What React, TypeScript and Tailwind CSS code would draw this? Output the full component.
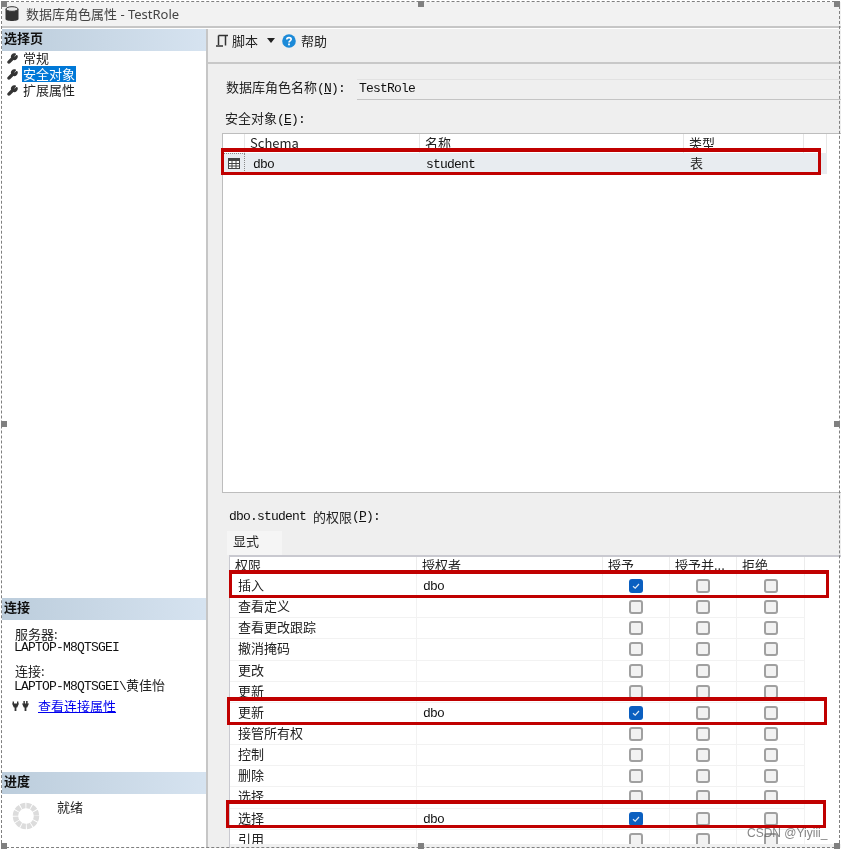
import { Wrench } from "lucide-react";
import type { ReactNode } from "react";

const mono = "font-['Liberation_Mono','Noto_Sans_CJK_SC',monospace] text-[13px] tracking-[-0.8px] text-[#111]";

type Perm = { name: string; grantor?: string; granted?: boolean };

const perms: Perm[] = [
  { name: "插入", grantor: "dbo", granted: true },
  { name: "查看定义" },
  { name: "查看更改跟踪" },
  { name: "撤消掩码" },
  { name: "更改" },
  { name: "更新" },
  { name: "更新", grantor: "dbo", granted: true },
  { name: "接管所有权" },
  { name: "控制" },
  { name: "删除" },
  { name: "选择" },
  { name: "选择", grantor: "dbo", granted: true },
  { name: "引用" },
];

function SectionHeader({ children }: { children: ReactNode }) {
  return (
    <div className="flex h-[22px] items-center bg-gradient-to-r from-[#bccddc] to-[#d6e3f0] pb-[6px] pl-[2px] font-bold leading-none text-[#111]">
      {children}
    </div>
  );
}

function PageItem({ label, active }: { label: string; active?: boolean }) {
  return (
    <div className="flex h-4 items-center pl-[5px]">
      <Wrench size={11} strokeWidth={3} className="mr-[4px] shrink-0 fill-[#333] text-[#333]" />
      <span className={active ? "bg-[#0078d7] px-[1px] pb-[1px] leading-[15px] text-white" : "px-[1px] pb-[1px] leading-[15px]"}>{label}</span>
    </div>
  );
}

function Checkbox({ checked }: { checked?: boolean }) {
  return (
    <div
      className={
        checked
          ? "flex h-[14px] w-[14px] items-center justify-center rounded-[3px] bg-[#0a5fc0]"
          : "h-[14px] w-[14px] rounded-[3px] border-2 border-[#a0a0a0] bg-[#f2f2f2]"
      }
    >
      {checked ? (
        <svg viewBox="0 0 10 10" className="h-[10px] w-[10px]">
          <path d="M2 5.2 L4.2 7.2 L8 3" fill="none" stroke="#dfe9f5" strokeWidth="1.2" />
        </svg>
      ) : null}
    </div>
  );
}

function RedBox({ className }: { className: string }) {
  return <div className={"pointer-events-none absolute border-[3px] border-t-4 border-[#c00000] " + className} />;
}

function Handle({ className }: { className: string }) {
  return <div className={"absolute h-[6px] w-[6px] bg-[#808080] " + className} />;
}

function DbIcon() {
  return (
    <svg viewBox="0 0 14 16" className="h-4 w-[14px] shrink-0">
      <path d="M0.5 3 V13 C0.5 15.6 13.5 15.6 13.5 13 V3 Z" fill="#333" />
      <ellipse cx="7" cy="3" rx="6" ry="2.3" fill="#e8e8e8" stroke="#333" strokeWidth="1" />
    </svg>
  );
}

function ScriptIcon() {
  return (
    <svg viewBox="0 0 14 14" className="h-[14px] w-[14px] shrink-0">
      <path d="M3.5 1.5 H13 M3.5 1.5 V11 M10.5 1.5 V11.5 M1 12 H8" fill="none" stroke="#333" strokeWidth="1.5" />
    </svg>
  );
}

function HelpIcon() {
  return (
    <svg viewBox="0 0 14 14" className="h-[14px] w-[14px] shrink-0">
      <circle cx="7" cy="7" r="6.8" fill="#1c8ad8" />
      <path d="M4.8 5.4 C4.8 3 9.2 3 9.2 5.3 C9.2 6.8 7 6.8 7 8.4" fill="none" stroke="#fff" strokeWidth="1.6" />
      <rect x="6.1" y="9.5" width="1.8" height="1.8" fill="#fff" />
    </svg>
  );
}

function PlugIcon() {
  return (
    <svg viewBox="0 0 17 10" className="h-[10px] w-[17px] shrink-0">
      <path d="M0 2.5 H7 L5.2 6.5 H1.8 Z M2.6 6.5 H4.4 V10 H2.6 Z M0.6 0.5 H2 V2.5 H0.6 Z M5 0.5 H6.4 V2.5 H5 Z" fill="#333" />
      <path d="M10 2.5 H17 L15.2 6.5 H11.8 Z M12.6 6.5 H14.4 V10 H12.6 Z M11.4 0 H12.9 V2.5 H11.4 Z M14.1 0 H15.6 V2.5 H14.1 Z" fill="#333" />
    </svg>
  );
}

function TableIcon() {
  return (
    <svg viewBox="0 0 12 11" className="h-[11px] w-3">
      <rect x="0.5" y="0.5" width="11" height="10" fill="#fff" stroke="#444" />
      <rect x="0.5" y="0.5" width="11" height="2.5" fill="#444" />
      <path d="M0.5 5.5 H11.5 M0.5 8 H11.5 M4 3 V10.5 M8 3 V10.5" stroke="#444" strokeWidth="1" />
    </svg>
  );
}

function Spinner() {
  return (
    <svg viewBox="0 0 28 28" className="h-[28px] w-[28px]">
      <circle cx="14" cy="14" r="10.5" fill="none" stroke="#dcdcdc" strokeWidth="5.5" strokeDasharray="4.6 0.9" />
    </svg>
  );
}

export default function App() {
  return (
    <div className="relative h-[850px] w-[841px] overflow-hidden bg-white pb-[2px] pl-[2px] pt-[2px] font-['Noto_Sans_CJK_SC','Liberation_Sans',sans-serif] text-[13px] text-[#222] blur-[0.3px]">
      <div className="flex h-full flex-col">
        {/* title bar */}
        <div className="flex h-[26px] shrink-0 items-center gap-[7px] border-b-2 border-[#c6c6c6] bg-[#f2f2f2] pl-[3px] text-[#444]">
          <DbIcon />
          <span className="whitespace-pre">
            数据库角色属性<span className="font-['Noto_Sans',sans-serif] text-[13px]"> - TestRole</span>
          </span>
        </div>

        <div className="flex min-h-0 flex-1 pt-[1px]">
          {/* left panel */}
          <div className="flex w-[204px] shrink-0 flex-col bg-white">
            <div className="flex-1">
              <SectionHeader>选择页</SectionHeader>
              <div className="-mt-[1px]">
                <PageItem label="常规" />
                <PageItem label="安全对象" active />
                <PageItem label="扩展属性" />
              </div>
            </div>
            <div className="h-[174px] shrink-0">
              <SectionHeader>连接</SectionHeader>
              <div className="pl-3 pt-[7px] leading-[13px]">
                <div className="pl-[1px]">服务器:</div>
                <div className={"pt-[1px] " + mono}>LAPTOP-M8QTSGEI</div>
                <div className="mt-[10px] pl-[1px]">连接:</div>
                <div className="whitespace-nowrap pt-[1px]">
                  <span className={mono}>LAPTOP-M8QTSGEI\</span>黄佳怡
                </div>
                <div className="-ml-[2px] mt-[6px] flex items-center gap-[9px]">
                  <PlugIcon />
                  <span className="text-[#0000ee] underline">查看连接属性</span>
                </div>
              </div>
            </div>
            <div className="h-[76px] shrink-0">
              <SectionHeader>进度</SectionHeader>
              <div className="flex items-start pl-[10px] pt-[8px]">
                <Spinner />
                <span className="-mt-[3px] ml-[17px] leading-4">就绪</span>
              </div>
            </div>
          </div>

          {/* right panel */}
          <div className="flex min-w-0 flex-1 flex-col border-l-2 border-[#c6c6c6] bg-[#efefef]">
            <div className="flex h-[35px] shrink-0 items-center border-b-2 border-[#c8c8c8] pb-[10px] pl-[7px]">
              <ScriptIcon />
              <span className="ml-[3px]">脚本</span>
              <span className="ml-[9px] h-0 w-0 border-x-[4.5px] border-t-[5px] border-x-transparent border-t-[#222]" />
              <span className="ml-[7px]">
                <HelpIcon />
              </span>
              <span className="ml-[5px]">帮助</span>
            </div>

            <div className="flex h-[35px] shrink-0 items-end pl-[18px]">
              <div className="flex h-[20px] w-full items-center">
                <span className="w-[131px] shrink-0 whitespace-pre pb-[2px]">
                  数据库角色名称
                  <span className={mono}>
                    (<span className="underline">N</span>):
                  </span>
                </span>
                <div className={"flex h-[21px] flex-1 items-center border-y border-b-[#c4c4c4] border-t-[#e2e2e2] pl-[2px] " + mono}>TestRole</div>
              </div>
            </div>

            <div className="flex h-[34px] shrink-0 items-center pb-[1px] pl-[17px] pt-[6px]">
              <span className="whitespace-pre">
                安全对象
                <span className={mono}>
                  (<span className="underline">E</span>):
                </span>
              </span>
            </div>

            {/* securables grid */}
            <div className="ml-[14px] h-[360px] shrink-0 overflow-hidden border-y border-l border-[#bdbdbd] bg-white">
              <div className="grid h-[19px] w-[604px] grid-cols-[22px_175px_264px_120px_23px] overflow-hidden">
                <div className="border-r border-[#e6e6e6]" />
                <div className="border-r border-[#e6e6e6] pl-[5px] leading-[17px]">Schema</div>
                <div className="border-r border-[#e6e6e6] pl-[5px] leading-[17px]">名称</div>
                <div className="border-r border-[#e6e6e6] pl-[5px] leading-[17px]">类型</div>
                <div className="border-r border-[#e6e6e6]" />
              </div>
              <div className="grid h-[21px] w-[604px] grid-cols-[22px_175px_264px_120px_23px] bg-[#e8ecf0]">
                <div className="flex items-center justify-center border border-dotted border-[#888]">
                  <TableIcon />
                </div>
                <div className={"flex items-center pl-[8px] pt-[2px] " + mono}>dbo</div>
                <div className={"flex items-center pl-[6px] pt-[2px] " + mono}>student</div>
                <div className="flex items-center pb-[2px] pl-[6px] leading-none">表</div>
                <div />
              </div>
            </div>

            <div className="flex h-[35px] shrink-0 items-end whitespace-pre pb-[3px] pl-[21px] leading-[16px]">
              <span className={mono}>dbo.student </span>的权限
              <span className={mono}>
                (<span className="underline">P</span>):
              </span>
            </div>

            {/* permission tab */}
            <div className="ml-[19px] mt-[3px] flex h-[24px] w-[55px] shrink-0 items-center bg-[#f5f5f5] pb-[6px] pl-[6px] leading-none">显式</div>

            {/* permissions grid */}
            <div className="ml-[21px] min-h-0 flex-1 overflow-hidden border-t-2 border-l border-[#c9c9d0] bg-white">
              <div className="grid h-[19px] w-[575px] grid-cols-[187px_186px_67px_67px_68px] overflow-hidden">
                {["权限", "授权者", "授予", "授予并...", "拒绝"].map((h) => (
                  <div key={h} className="whitespace-nowrap border-r border-[#ececec] pl-[5px] leading-[16px]">
                    {h}
                  </div>
                ))}
              </div>
              <div className="h-[268px] overflow-hidden">
                {perms.map((p, i) => (
                  <div key={i} className="grid h-[21.15px] w-[575px] grid-cols-[187px_186px_67px_67px_68px]">
                    <div className="flex items-center border-r border-b border-[#f2f2f2] pb-[3px] pl-[8px] leading-none">{p.name}</div>
                    <div className={"flex items-center border-r border-b border-[#f2f2f2] pl-[6px] pt-[1px] " + mono}>{p.grantor}</div>
                    <div className="flex items-center justify-center border-r border-b border-[#f2f2f2]">
                      <Checkbox checked={p.granted} />
                    </div>
                    <div className="flex items-center justify-center border-r border-b border-[#f2f2f2]">
                      <Checkbox />
                    </div>
                    <div className="flex items-center justify-center border-r border-b border-[#f2f2f2]">
                      <Checkbox />
                    </div>
                  </div>
                ))}
              </div>
              <div className="h-[8px] bg-[#f0f0f0]" />
            </div>
          </div>
        </div>
      </div>

      {/* dashed selection frame and handles from the screenshot */}
      <div className="pointer-events-none absolute left-[1px] top-[1px] h-[847px] w-[839px] border border-dashed border-[#808080]" />
      <Handle className="left-[1px] top-[1px]" />
      <Handle className="left-[418px] top-[1px]" />
      <Handle className="left-[834px] top-[1px]" />
      <Handle className="left-[1px] top-[421px]" />
      <Handle className="left-[834px] top-[421px]" />
      <Handle className="left-[1px] top-[843px]" />
      <Handle className="left-[418px] top-[843px]" />
      <Handle className="left-[834px] top-[843px]" />

      {/* red annotations */}
      <RedBox className="left-[221px] top-[148px] h-[27px] w-[600px]" />
      <RedBox className="left-[229px] top-[570px] h-[28px] w-[600px]" />
      <RedBox className="left-[227px] top-[697px] h-[28px] w-[600px]" />
      <RedBox className="left-[226px] top-[800px] h-[28px] w-[600px]" />

      <div className="absolute left-[747px] top-[825px] font-['Liberation_Sans',sans-serif] text-[12px] leading-4 text-[#666]/80">CSDN @Yiyiii_</div>
    </div>
  );
}
